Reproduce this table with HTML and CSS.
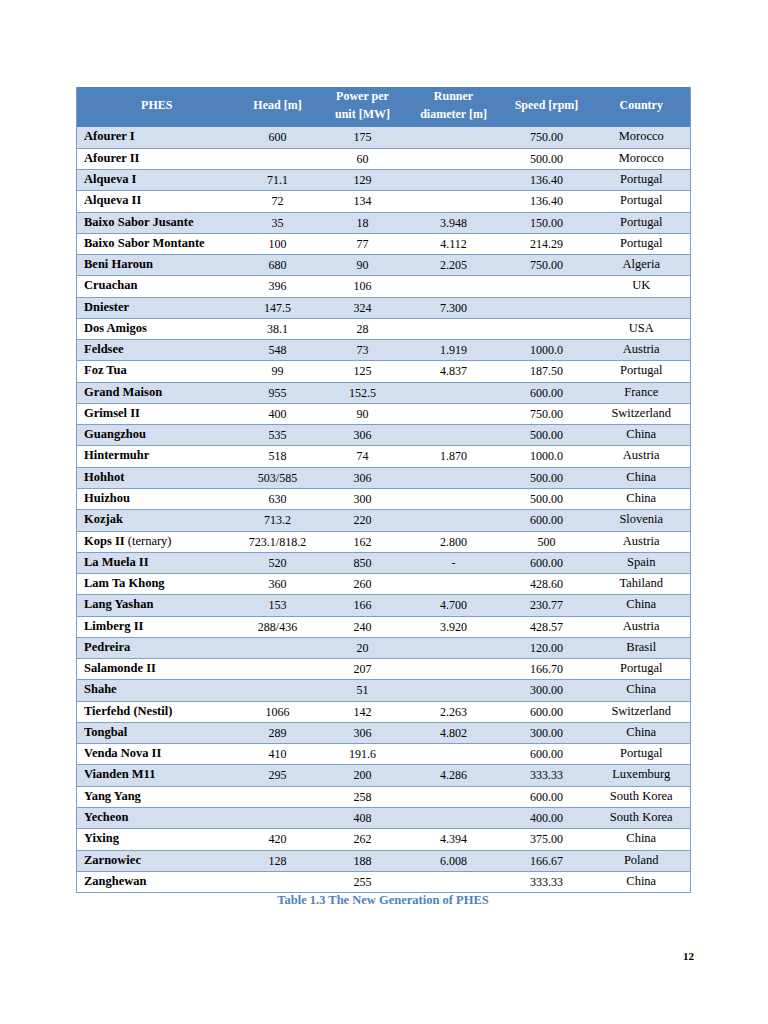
FILE: index.html
```html
<!DOCTYPE html>
<html>
<head>
<meta charset="utf-8">
<link rel="stylesheet" href="styles.css">
</head>
<body>
<div class="page">
<table class="phes">
<colgroup>
<col class="c1"><col class="c2"><col class="c3"><col class="c4"><col class="c5"><col class="c6">
</colgroup>
<thead>
<tr><th>PHES</th><th>Head [m]</th><th>Power per<br>unit [MW]</th><th>Runner<br>diameter [m]</th><th>Speed [rpm]</th><th>Country</th></tr>
</thead>
<tbody>
<tr class="s"><td>Afourer I</td><td>600</td><td>175</td><td></td><td>750.00</td><td>Morocco</td></tr>
<tr><td>Afourer II</td><td></td><td>60</td><td></td><td>500.00</td><td>Morocco</td></tr>
<tr class="s"><td>Alqueva I</td><td>71.1</td><td>129</td><td></td><td>136.40</td><td>Portugal</td></tr>
<tr><td>Alqueva II</td><td>72</td><td>134</td><td></td><td>136.40</td><td>Portugal</td></tr>
<tr class="s"><td>Baixo Sabor Jusante</td><td>35</td><td>18</td><td>3.948</td><td>150.00</td><td>Portugal</td></tr>
<tr><td>Baixo Sabor Montante</td><td>100</td><td>77</td><td>4.112</td><td>214.29</td><td>Portugal</td></tr>
<tr class="s"><td>Beni Haroun</td><td>680</td><td>90</td><td>2.205</td><td>750.00</td><td>Algeria</td></tr>
<tr><td>Cruachan</td><td>396</td><td>106</td><td></td><td></td><td>UK</td></tr>
<tr class="s"><td>Dniester</td><td>147.5</td><td>324</td><td>7.300</td><td></td><td></td></tr>
<tr><td>Dos Amigos</td><td>38.1</td><td>28</td><td></td><td></td><td>USA</td></tr>
<tr class="s"><td>Feldsee</td><td>548</td><td>73</td><td>1.919</td><td>1000.0</td><td>Austria</td></tr>
<tr><td>Foz Tua</td><td>99</td><td>125</td><td>4.837</td><td>187.50</td><td>Portugal</td></tr>
<tr class="s"><td>Grand Maison</td><td>955</td><td>152.5</td><td></td><td>600.00</td><td>France</td></tr>
<tr><td>Grimsel II</td><td>400</td><td>90</td><td></td><td>750.00</td><td>Switzerland</td></tr>
<tr class="s"><td>Guangzhou</td><td>535</td><td>306</td><td></td><td>500.00</td><td>China</td></tr>
<tr><td>Hintermuhr</td><td>518</td><td>74</td><td>1.870</td><td>1000.0</td><td>Austria</td></tr>
<tr class="s"><td>Hohhot</td><td>503/585</td><td>306</td><td></td><td>500.00</td><td>China</td></tr>
<tr><td>Huizhou</td><td>630</td><td>300</td><td></td><td>500.00</td><td>China</td></tr>
<tr class="s"><td>Kozjak</td><td>713.2</td><td>220</td><td></td><td>600.00</td><td>Slovenia</td></tr>
<tr><td>Kops II <span class="n">(ternary)</span></td><td>723.1/818.2</td><td>162</td><td>2.800</td><td>500</td><td>Austria</td></tr>
<tr class="s"><td>La Muela II</td><td>520</td><td>850</td><td>-</td><td>600.00</td><td>Spain</td></tr>
<tr><td>Lam Ta Khong</td><td>360</td><td>260</td><td></td><td>428.60</td><td>Tahiland</td></tr>
<tr class="s"><td>Lang Yashan</td><td>153</td><td>166</td><td>4.700</td><td>230.77</td><td>China</td></tr>
<tr><td>Limberg II</td><td>288/436</td><td>240</td><td>3.920</td><td>428.57</td><td>Austria</td></tr>
<tr class="s"><td>Pedreira</td><td></td><td>20</td><td></td><td>120.00</td><td>Brasil</td></tr>
<tr><td>Salamonde II</td><td></td><td>207</td><td></td><td>166.70</td><td>Portugal</td></tr>
<tr class="s"><td>Shahe</td><td></td><td>51</td><td></td><td>300.00</td><td>China</td></tr>
<tr><td>Tierfehd (Nestil)</td><td>1066</td><td>142</td><td>2.263</td><td>600.00</td><td>Switzerland</td></tr>
<tr class="s"><td>Tongbal</td><td>289</td><td>306</td><td>4.802</td><td>300.00</td><td>China</td></tr>
<tr><td>Venda Nova II</td><td>410</td><td>191.6</td><td></td><td>600.00</td><td>Portugal</td></tr>
<tr class="s"><td>Vianden M11</td><td>295</td><td>200</td><td>4.286</td><td>333.33</td><td>Luxemburg</td></tr>
<tr><td>Yang Yang</td><td></td><td>258</td><td></td><td>600.00</td><td>South Korea</td></tr>
<tr class="s"><td>Yecheon</td><td></td><td>408</td><td></td><td>400.00</td><td>South Korea</td></tr>
<tr><td>Yixing</td><td>420</td><td>262</td><td>4.394</td><td>375.00</td><td>China</td></tr>
<tr class="s"><td>Zarnowiec</td><td>128</td><td>188</td><td>6.008</td><td>166.67</td><td>Poland</td></tr>
<tr><td>Zanghewan</td><td></td><td>255</td><td></td><td>333.33</td><td>China</td></tr>
</tbody>
</table>
<div class="caption">Table 1.3 The New Generation of PHES</div>
<div class="pagenum">12</div>
</div>
</body>
</html>
```

FILE: styles.css
```css
html, body {
  margin: 0;
  padding: 0;
  background: #ffffff;
}
.page {
  width: 768px;
  height: 1024px;
  padding: 87px 0 0 76px;
  box-sizing: border-box;
  font-family: "Liberation Serif", "DejaVu Serif", serif;
  color: #000000;
}
.phes {
  border-collapse: collapse;
  table-layout: fixed;
  width: 614px;
  font-size: 12px;
}
.c1 { width: 160px; }
.c2 { width: 82px; }
.c3 { width: 88px; }
.c4 { width: 94px; }
.c5 { width: 92px; }
.c6 { width: 98px; }
.phes thead tr { height: 40px; }
.phes th {
  background: #4f81bd;
  color: #ffffff;
  font-weight: bold;
  font-size: 12px;
  line-height: 18px;
  height: 40px;
  padding: 0 0 4px 0;
  box-sizing: border-box;
  text-align: center;
  vertical-align: middle;
  border-left: 1px solid #7ba0cd;
  border-right: 1px solid #7ba0cd;
}
.phes th:not(:first-child) { border-left: none; }
.phes th:not(:last-child) { border-right: none; }
.phes td {
  height: 20px;
  padding: 2px 0 0 0;
  box-sizing: border-box;
  vertical-align: top;
  text-align: center;
  line-height: 14px;
  border-bottom: 1px solid #7ba0cd;
}
.phes tbody tr { height: 21.28px; }
.phes td:first-child {
  text-align: left;
  padding-left: 7px;
  font-weight: bold;
  font-size: 12.5px;
  border-left: 1px solid #7ba0cd;
}
.phes td:last-child {
  border-right: 1px solid #7ba0cd;
  font-size: 12.5px;
}
.phes td:not(:first-child):not(:last-child) { padding-top: 3px; }
.phes .n { font-weight: normal; }
.phes tr.s td { background: #d3dfee; }
.caption {
  width: 614px;
  margin-top: 0;
  text-align: center;
  color: #4f81bd;
  font-weight: bold;
  font-size: 12.5px;
}
.pagenum {
  width: 618px;
  margin-top: 42px;
  text-align: right;
  font-weight: bold;
  font-size: 11px;
}
```
